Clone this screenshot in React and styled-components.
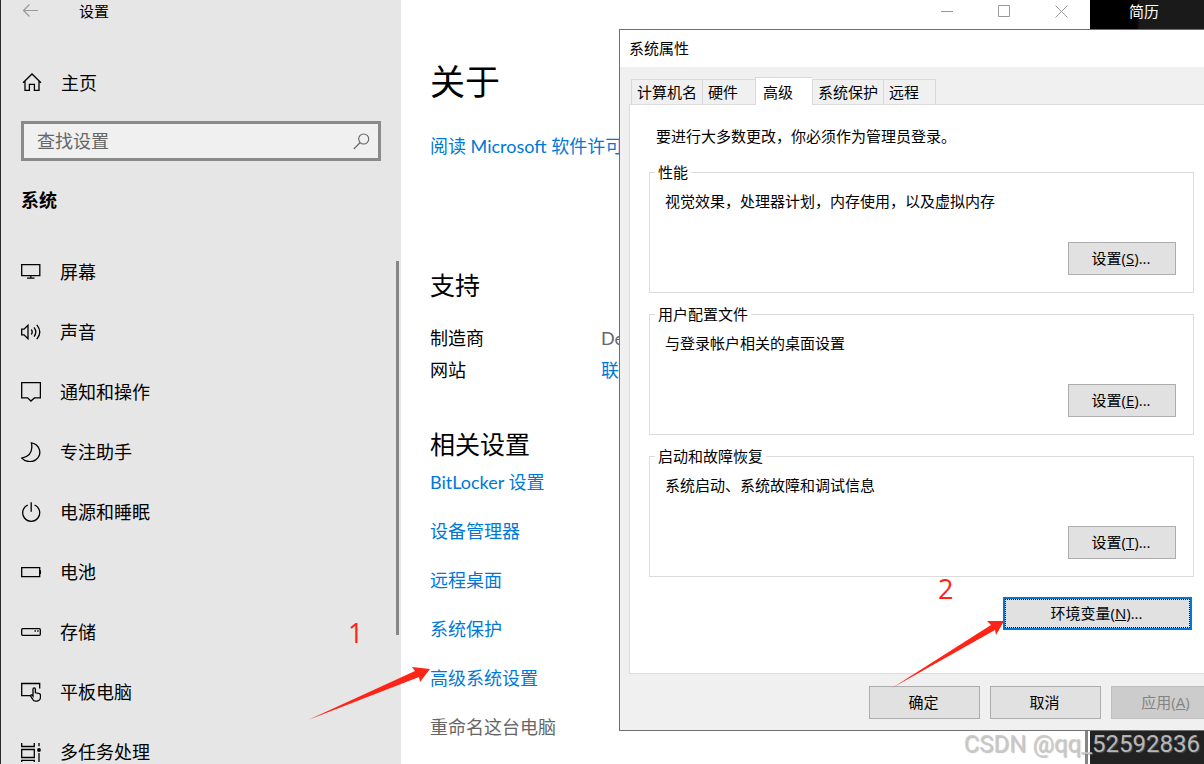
import React from "react";
import styled, { createGlobalStyle, css } from "styled-components";

const GlobalStyle = createGlobalStyle`
  * { box-sizing: border-box; }
  body {
    margin: 0;
    overflow: hidden;
    color: #000;
    font-family: "Open Sans", "Noto Sans CJK SC", sans-serif;
    font-size: 18px;
    font-weight: 400;
  }
  button, input { font-family: inherit; font-weight: inherit; }
  h1, h2, p, ul, dl, dd { margin: 0; padding: 0; font-weight: inherit; }
`;

const Desktop = styled.div`
  position: relative;
  display: flex;
  height: 100vh;
  overflow: hidden;
  background: #fff;
`;

/* Settings window: left pane */

const Sidebar = styled.aside`
  display: flex;
  flex-direction: column;
  flex: 0 0 401px;
  background: #e6e6e6;
  border-left: 1px solid #2b2b2b;
`;

const SidebarTitle = styled.header`
  display: flex;
  align-items: center;
  gap: 40px;
  height: 22px;
  padding-left: 21px;
  font-size: 15px;
  line-height: 22px;
`;

const BackButton = styled.button`
  display: flex;
  padding: 0;
  border: 0;
  background: none;
  color: #999;
`;

const PaneLink = styled.a`
  display: flex;
  align-items: center;
  gap: 19px;
  height: ${(p) => p.$height}px;
  padding-left: 20px;
  color: #000;
  font-size: 18px;
  line-height: 24px;
  text-decoration: none;
`;

const HomeArea = styled.div`
  padding: 30px 0 8px;
`;

const SearchBox = styled.label`
  display: flex;
  align-items: center;
  height: 40px;
  margin: 0 20px;
  padding: 0 8px 0 13px;
  border: 3px solid #8a8a8a;
  background: #f0f0f0;
  color: #666;
`;

const SearchInput = styled.input`
  flex: 1;
  min-width: 0;
  padding: 0;
  border: 0;
  outline: 0;
  background: none;
  font-size: 18px;
  line-height: 24px;
  &::placeholder { color: #666; opacity: 1; }
`;

const PaneHeading = styled.h2`
  padding: 27px 20px 0;
  font-size: 18px;
  line-height: 24px;
  && { font-weight: 700; }
`;

const PaneScroll = styled.div`
  display: flex;
  flex: 1;
  min-height: 0;
  margin-top: 30px;
  overflow: hidden;
`;

const NavList = styled.ul`
  flex: 1;
  list-style: none;
`;

const ScrollThumb = styled.div`
  width: 3px;
  height: 374px;
  margin: 19px 2px 0 0;
  background: #858585;
`;

/* Settings window: right pane */

const Content = styled.main`
  display: flex;
  flex-direction: column;
  flex: 1;
  min-width: 0;
`;

const WindowControls = styled.div`
  display: flex;
  justify-content: flex-end;
  height: 30px;
  padding-bottom: 8px;
`;

const WindowButton = styled.button`
  display: flex;
  align-items: center;
  justify-content: center;
  width: 57px;
  padding: 0;
  border: 0;
  background: none;
  color: #999;
`;

const ContentBody = styled.div`
  flex: 1;
  margin-right: 2px;
  padding: 26px 0 0 29px;
  border-right: 3px solid #858585;
  font-family: Lato, "Noto Sans CJK SC", sans-serif;
  white-space: nowrap;
`;

const PageTitle = styled.h1`
  margin-bottom: 28px;
  font-size: 35px;
  line-height: 50px;
`;

const TextLink = styled.a`
  display: block;
  width: fit-content;
  color: ${(p) => (p.$muted ? "#666" : "#0078d7")};
  line-height: 24px;
  text-decoration: none;
`;

const SectionTitle = styled.h2`
  margin-top: ${(p) => p.$top}px;
  font-size: 25px;
  line-height: 34px;
`;

const Details = styled.dl`
  display: grid;
  grid-template-columns: 171px auto;
  justify-content: start;
  margin-top: 20px;
  line-height: 32px;
`;

const DetailValue = styled.dd`
  color: #666;
  a { line-height: 32px; }
`;

const LinkList = styled.div`
  display: flex;
  flex-direction: column;
  gap: 25px;
  margin-top: 9px;
`;

/* Desktop strip on the right */

const DesktopStrip = styled.div`
  flex: 0 0 114px;
  background: linear-gradient(90deg, #000 0 46px, #1a1a1a 50px) top / 100% 30px no-repeat #222;
  color: #fff;
  font-size: 15px;
  line-height: 22px;
  padding-left: 39px;
`;

/* System properties dialog */

const Dialog = styled.section`
  position: absolute;
  top: 29px;
  left: 619px;
  right: -28px;
  border: 1px solid #707070;
  background: #f0f0f0;
  font-size: 15px;
  line-height: 20px;
`;

const DialogTitle = styled.h2`
  height: 37px;
  padding-left: 9px;
  background: #fff;
  font-size: 15px;
  line-height: 37px;
`;

const DialogBody = styled.div`
  padding: 10px 9px 11px;
`;

const TabBar = styled.div`
  display: flex;
  align-items: flex-end;
  height: 27px;
  padding-left: 2px;
`;

const Tab = styled.button`
  height: 25px;
  min-width: 53px;
  padding: 0 5px;
  border: 1px solid #d9d9d9;
  border-width: 1px 0 0 1px;
  background: #f0f0f0;
  color: #000;
  font-size: 15px;
  line-height: 24px;
  text-align: left;
  &:last-child { border-right-width: 1px; }
  ${(p) =>
    p.$active &&
    css`
      position: relative;
      height: 28px;
      min-width: 57px;
      margin-bottom: -1px;
      padding: 0 7px;
      background: #fff;
    `}
`;

const TabPage = styled.div`
  display: flex;
  flex-direction: column;
  gap: 12px;
  padding: 21px 27px 43px 19px;
  border: 1px solid #dcdcdc;
  background: #fff;
`;

const Notice = styled.p`
  margin-bottom: 5px;
  padding-left: 7px;
`;

const Group = styled.fieldset`
  display: block;
  min-width: 0;
  margin: 0;
  padding: 10px 17px 17px 15px;
  border: 1px solid #dcdcdc;
`;

const GroupTitle = styled.legend`
  margin-left: -10px;
  padding: 0 3px;
  line-height: 18px;
`;

const ButtonRow = styled.div`
  display: flex;
  justify-content: flex-end;
  gap: 10px;
  margin-top: ${(p) => p.$top}px;
  padding-right: ${(p) => p.$right || 0}px;
`;

const PushButton = styled.button`
  width: ${(p) => p.$width}px;
  height: 33px;
  padding: 0 2px 2px 0;
  border: 1px solid #adadad;
  background: #e1e1e1;
  color: #000;
  font-size: 15px;
  line-height: 20px;
  &:disabled {
    border-color: #bfbfbf;
    background: #ccc;
    color: #838383;
  }
  ${(p) =>
    p.$focused &&
    css`
      border: 2px solid #0078d7;
      outline: 1px dotted #000;
      outline-offset: -3px;
    `}
`;

/* Annotations drawn over the windows */

const Mark = styled.span`
  position: absolute;
  left: ${(p) => p.$x}px;
  top: ${(p) => p.$y}px;
  color: #ff2415;
  font-size: 27px;
  line-height: 30px;
`;

const Arrow = styled.svg`
  position: absolute;
  left: ${(p) => p.$x}px;
  top: ${(p) => p.$y}px;
  fill: #ff2415;
  pointer-events: none;
`;

const Watermark = styled.span`
  position: absolute;
  right: 4px;
  bottom: 5px;
  color: rgba(200, 200, 200, 0.9);
  font-family: Roboto, sans-serif;
  font-size: 24px;
  line-height: 30px;
  text-shadow: 1px 1px 1px rgba(130, 130, 130, 0.5);
`;

const Icon = ({ children, size = 20 }) => (
  <svg width={size} height={size} viewBox={`0 0 ${size} ${size}`} fill="none" stroke="currentColor" strokeWidth="1.3" aria-hidden="true">
    {children}
  </svg>
);

const navItems = [
  ["屏幕", <><path d="M.7 2.7h18.1v11H.7zM9.8 13.7V16M6 16.2h7.5" /></>],
  ["声音", <><path d="M.7 7.2H3L7 3.2v13.6l-4-4H.7z" /><path d="M10.3 7.5q1.8 2.5 0 5M13 5.3q3.6 4.7 0 9.4M15.8 2.8q6 7.2 0 14.4" /></>],
  ["通知和操作", <path d="M.7 .7h18.7v15.2h-6l-3.5 3.1-3.3-3.1H.7z" />],
  ["专注助手", <path d="M10.4.8Q13 13.5.8 16.1C4.3 20 10.5 20.8 15 17.6 21.5 12.5 19.3 2.5 10.4.8z" />],
  ["电源和睡眠", <><path d="M6.8 3a8.5 8.5 0 1 0 6.8 0" /><path d="M10.2.2v9.6" /></>],
  ["电池", <><path d="M.7 5.6h18v9H.7z" /><path d="M19.3 8.2v3.8" /></>],
  ["存储", <><rect x=".7" y="6.7" width="18.6" height="6.6" rx="1" /><path d="M13.5 9h1.4M16.2 9h1.4" /></>],
  ["平板电脑", <><path d="M9 13.7H.7V1.5h18v5" /><path d="M12 14V7.2c0-1.8 2.4-1.8 2.4 0v3.6l3.3.6c1.4.2 1.8 1 1.8 2.2v1.3c0 5-6.8 5.4-7.9 2.2l-2-3c-.2-1.6 1.2-1.7 2.4-.1z" /></>],
  ["多任务处理", <><path d="M.7 1v3.5h12.6V1M.7 7.5h12.6v8H.7zM.7 20v-1.7h12.6V20M18 1v3.2M18 11v9" /><circle cx="18" cy="8" r="1.9" fill="currentColor" stroke="none" /></>],
];

const relatedLinks = ["BitLocker 设置", "设备管理器", "远程桌面", "系统保护", "高级系统设置"];
const tabs = ["计算机名", "硬件", "高级", "系统保护", "远程"];
const groups = [
  ["性能", "视觉效果，处理器计划，内存使用，以及虚拟内存", "S"],
  ["用户配置文件", "与登录帐户相关的桌面设置", "E"],
  ["启动和故障恢复", "系统启动、系统故障和调试信息", "T"],
];

function SettingsSidebar() {
  return (
    <Sidebar>
      <SidebarTitle>
        <BackButton aria-label="返回">
          <svg width="17" height="14" viewBox="0 0 17 14" fill="none" stroke="currentColor" strokeWidth="1.2">
            <path d="M16 6.5H1.5M7.5.5l-6 6 6 6" />
          </svg>
        </BackButton>
        <span>设置</span>
      </SidebarTitle>
      <HomeArea>
        <PaneLink href="#home" $height={61}>
          <Icon size={21}>
            <path d="M2 10.7L11 2l9 8.7M4 9v9.3h4.4v-6h5v6H18V9" />
          </Icon>
          主页
        </PaneLink>
      </HomeArea>
      <SearchBox>
        <SearchInput type="text" placeholder="查找设置" aria-label="查找设置" />
        <svg width="17" height="17" viewBox="0 0 17 17" fill="none" stroke="currentColor" strokeWidth="1.1">
          <circle cx="10.7" cy="6" r="5" />
          <path d="M7.2 9.5L.8 16" />
        </svg>
      </SearchBox>
      <PaneHeading>系统</PaneHeading>
      <PaneScroll>
        <NavList>
          {navItems.map(([name, drawing]) => (
            <li key={name}>
              <PaneLink href="#item" $height={60}>
                <Icon>{drawing}</Icon>
                {name}
              </PaneLink>
            </li>
          ))}
        </NavList>
        <ScrollThumb />
      </PaneScroll>
    </Sidebar>
  );
}

function SettingsContent() {
  return (
    <Content>
      <WindowControls>
        <WindowButton aria-label="最小化">
          <svg width="13" height="13" stroke="currentColor"><path d="M0 6.5h12" /></svg>
        </WindowButton>
        <WindowButton aria-label="最大化">
          <svg width="13" height="13" fill="none" stroke="currentColor"><path d="M.5.5h11v11H.5z" /></svg>
        </WindowButton>
        <WindowButton aria-label="关闭">
          <svg width="13" height="13" stroke="currentColor"><path d="M.5.5l12 12M12.5.5l-12 12" /></svg>
        </WindowButton>
      </WindowControls>
      <ContentBody>
        <PageTitle>关于</PageTitle>
        <TextLink href="#license">阅读 Microsoft 软件许可</TextLink>
        <SectionTitle $top={110}>支持</SectionTitle>
        <Details>
          <dt>制造商</dt>
          <DetailValue>De</DetailValue>
          <dt>网站</dt>
          <DetailValue><TextLink href="#support">联</TextLink></DetailValue>
        </Details>
        <SectionTitle $top={41}>相关设置</SectionTitle>
        <LinkList>
          {relatedLinks.map((name) => (
            <TextLink key={name} href="#related">{name}</TextLink>
          ))}
          <TextLink href="#rename" $muted>重命名这台电脑</TextLink>
        </LinkList>
      </ContentBody>
    </Content>
  );
}

function SystemProperties() {
  return (
    <Dialog role="dialog" aria-label="系统属性">
      <DialogTitle>系统属性</DialogTitle>
      <DialogBody>
        <TabBar role="tablist">
          {tabs.map((name) => (
            <Tab key={name} role="tab" aria-selected={name === "高级"} $active={name === "高级"}>{name}</Tab>
          ))}
        </TabBar>
        <TabPage role="tabpanel">
          <Notice>要进行大多数更改，你必须作为管理员登录。</Notice>
          {groups.map(([title, text, accessKey]) => (
            <Group key={title}>
              <GroupTitle>{title}</GroupTitle>
              <p>{text}</p>
              <ButtonRow $top={31}>
                <PushButton $width={108}>设置(<u>{accessKey}</u>)...</PushButton>
              </ButtonRow>
            </Group>
          ))}
          <ButtonRow $top={8} $right={2}>
            <PushButton $width={189} $focused>环境变量(<u>N</u>)...</PushButton>
          </ButtonRow>
        </TabPage>
        <ButtonRow $top={12}>
          <PushButton $width={111}>确定</PushButton>
          <PushButton $width={111}>取消</PushButton>
          <PushButton $width={111} disabled>应用(<u>A</u>)</PushButton>
        </ButtonRow>
      </DialogBody>
    </Dialog>
  );
}

export default function App() {
  return (
    <>
      <GlobalStyle />
      <Desktop>
        <SettingsSidebar />
        <SettingsContent />
        <DesktopStrip>简历</DesktopStrip>
        <SystemProperties />
        <Mark $x={348} $y={618}>1</Mark>
        <Arrow $x={308} $y={666} width="122" height="54" viewBox="0 0 122 54">
          <path d="M0 54L107 5l-3-4 18 2-10 13-1-5z" />
        </Arrow>
        <Mark $x={938} $y={574}>2</Mark>
        <Arrow $x={892} $y={620} width="113" height="68" viewBox="0 0 113 68">
          <path d="M0 68L99 5l-4-4 17 0-8 14-1-5z" />
        </Arrow>
        <Watermark>CSDN @qq_52592836</Watermark>
      </Desktop>
    </>
  );
}
